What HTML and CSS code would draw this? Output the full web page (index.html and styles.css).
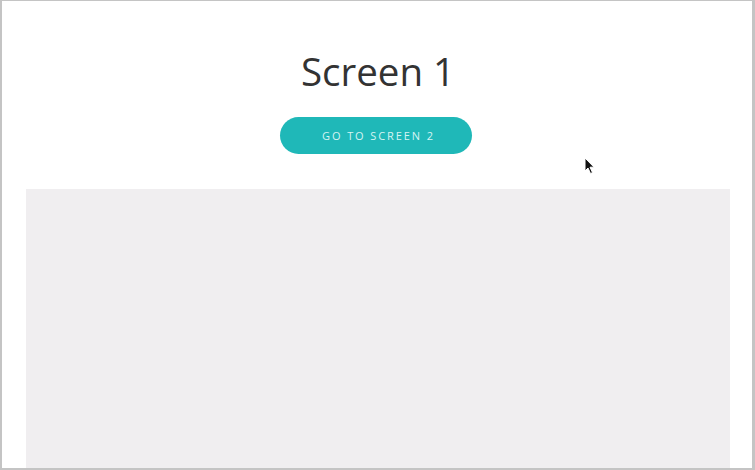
FILE: index.html
```html
<!DOCTYPE html>
<html lang="en">
<head>
<meta charset="utf-8">
<title>Screen 1</title>
<link rel="stylesheet" href="styles.css">
</head>
<body>
<div class="frame">
  <header class="hero">
    <h1 class="title">Screen 1</h1>
    <button class="cta" type="button">GO TO SCREEN 2</button>
  </header>
  <div class="panel"></div>
  <svg class="cursor" width="12" height="18" viewBox="0 0 12 18" aria-hidden="true">
    <path d="M1 1 L1 14 L4 11 L6.5 16.5 L8.5 15.6 L6 10.2 L10 10.2 Z" fill="#111" stroke="#fff" stroke-width="1" stroke-linejoin="round"/>
  </svg>
</div>
</body>
</html>
```

FILE: styles.css
```css
* { box-sizing: border-box; }

html, body {
  margin: 0;
  padding: 0;
  background: #ffffff;
}

body {
  font-family: "Open Sans", "Liberation Sans", sans-serif;
}

.frame {
  position: relative;
  width: 755px;
  height: 470px;
  border-style: solid;
  border-color: #c4c4c4;
  border-width: 1px 3px 2px 2px;
  background: #ffffff;
  display: flex;
  flex-direction: column;
  overflow: hidden;
  padding: 43px 22px 0 24px;
}

.hero {
  display: flex;
  flex-direction: column;
  align-items: center;
  margin-left: -24px;
  margin-right: -22px;
}

.title {
  margin: 0;
  font-size: 38.5px;
  line-height: 54px;
  font-weight: 400;
  color: #333333;
  padding-left: 2px;
}

.cta {
  margin-top: 19px;
  margin-right: 3px;
  width: 192px;
  height: 37px;
  border: none;
  border-radius: 19px;
  background: #1fb8b8;
  color: #d6f4f3;
  font-family: "Open Sans", "Liberation Sans", sans-serif;
  font-size: 11px;
  font-weight: 400;
  letter-spacing: 1.9px;
  padding: 0 0 0 6px;
  cursor: pointer;
}

.panel {
  margin-top: 35px;
  flex: 1;
  background: #f0eef0;
}

.cursor {
  position: absolute;
  left: 582px;
  top: 156px;
}
```
